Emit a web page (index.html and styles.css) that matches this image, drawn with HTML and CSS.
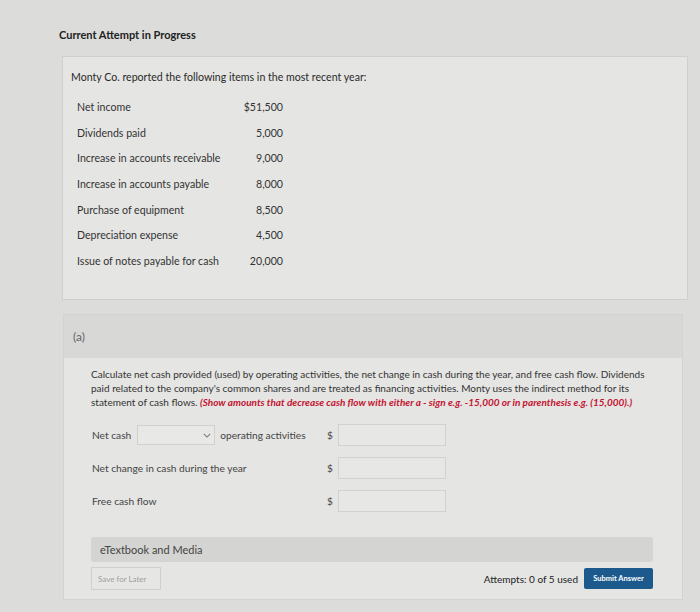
FILE: index.html
```html
<!DOCTYPE html>
<html lang="en">
<head>
<meta charset="utf-8">
<title>Current Attempt in Progress</title>
<link rel="stylesheet" href="styles.css">
</head>
<body>
<div class="page">
  <h1 class="attempt-title">Current Attempt in Progress</h1>

  <section class="problem-card">
    <p class="intro">Monty Co. reported the following items in the most recent year:</p>
    <div class="data-table">
      <div class="label">Net income</div><div class="value">$51,500</div>
      <div class="label">Dividends paid</div><div class="value">5,000</div>
      <div class="label">Increase in accounts receivable</div><div class="value">9,000</div>
      <div class="label">Increase in accounts payable</div><div class="value">8,000</div>
      <div class="label">Purchase of equipment</div><div class="value">8,500</div>
      <div class="label">Depreciation expense</div><div class="value">4,500</div>
      <div class="label">Issue of notes payable for cash</div><div class="value">20,000</div>
    </div>
  </section>

  <section class="question-card">
    <div class="part-band">(a)</div>
    <div class="question-body">
      <p class="question-text">Calculate net cash provided (used) by operating activities, the net change in cash during the year, and free cash flow. Dividends paid related to the company's common shares and are treated as financing activities. Monty uses the indirect method for its statement of cash flows. <span class="hint">(Show amounts that decrease cash flow with either a - sign e.g. -15,000 or in parenthesis e.g. (15,000).)</span></p>

      <div class="answer-grid">
        <div class="row-label">
          <span>Net cash</span>
          <span class="select"><svg class="chev" viewBox="0 0 10 6" width="8" height="5"><path d="M1 1 L5 5 L9 1" fill="none" stroke="#777" stroke-width="1.3"/></svg></span>
          <span>operating activities</span>
        </div>
        <div class="dollar">$</div>
        <div class="amount"></div>

        <div class="row-label">Net change in cash during the year</div>
        <div class="dollar">$</div>
        <div class="amount"></div>

        <div class="row-label">Free cash flow</div>
        <div class="dollar">$</div>
        <div class="amount"></div>
      </div>

      <div class="media-band">eTextbook and Media</div>

      <div class="footer-row">
        <button class="save-btn" type="button">Save for Later</button>
        <div class="submit-area">
          <span class="attempts">Attempts: 0 of 5 used</span>
          <button class="submit-btn" type="button">Submit Answer</button>
        </div>
      </div>
    </div>
  </section>
</div>
</body>
</html>
```

FILE: styles.css
```css
* { box-sizing: border-box; }

html, body {
  margin: 0;
  padding: 0;
  background: #dcdcda;
  font-family: Lato, "Open Sans", Arial, sans-serif;
  color: #2c2c2c;
}

.page {
  padding: 28px 12px 0 59px;
}

.attempt-title {
  margin: 0 0 15px 0;
  font-size: 11px;
  line-height: 13px;
  font-weight: 700;
  color: #222;
}

.problem-card {
  margin-left: 3px;
  width: 626px;
  height: 244px;
  border: 1px solid #cfcfcd;
  background: #e5e5e3;
  padding: 14px 8px 0 8px;
}

.intro {
  margin: 0;
  font-size: 10.6px;
  line-height: 13px;
  color: #2a2a2a;
}

.data-table {
  margin: 10px 0 0 6px;
  display: grid;
  grid-template-columns: 166px 40px;
  grid-auto-rows: 25.7px;
  font-size: 10.6px;
  color: #333;
  align-items: center;
}

.data-table .value {
  text-align: right;
  white-space: nowrap;
}

.question-card {
  margin: 14px 0 0 4px;
  width: 620px;
  background: #e5e5e3;
  border: 1px solid #d3d3d1;
  padding-bottom: 9px;
}

.part-band {
  height: 43px;
  background: #d8d8d6;
  padding-left: 9px;
  display: flex;
  align-items: center;
  font-size: 12px;
  color: #666;
}

.question-body {
  padding: 9px 27px 0 27px;
}

.question-text {
  margin: 0;
  width: 562px;
  font-size: 10px;
  line-height: 14px;
  color: #333;
}

.hint {
  display: inline-block;
  color: #c41230;
  font-weight: 700;
  font-style: italic;
  font-size: 10px;
  line-height: 14px;
  white-space: nowrap;
}

.answer-grid {
  margin-top: 15px;
  margin-left: 1px;
  display: grid;
  grid-template-columns: 235px 11px 108px;
  grid-auto-rows: 22px;
  row-gap: 11px;
  align-items: center;
  font-size: 10.2px;
  color: #444;
}

.row-label {
  display: flex;
  align-items: center;
  gap: 5px;
  white-space: nowrap;
}

.select {
  width: 78px;
  height: 20px;
  border: 1px solid #d0d0ce;
  background: #e8e8e6;
  display: flex;
  align-items: center;
  justify-content: flex-end;
  padding-right: 3px;
  margin-left: 1px;
}

.chev { display: block; }

.dollar {
  font-size: 10px;
  color: #444;
}

.amount {
  height: 22px;
  border: 1px solid #d2d2d0;
  background: #e7e7e5;
}

.media-band {
  margin-top: 25px;
  height: 25px;
  width: 562px;
  border-radius: 3px;
  background: #d4d4d2;
  display: flex;
  align-items: center;
  padding-left: 9px;
  font-size: 11px;
  color: #444;
}

.footer-row {
  margin-top: 5px;
  width: 562px;
  display: flex;
  justify-content: space-between;
  align-items: center;
}

.save-btn {
  width: 70px;
  height: 23px;
  border: 1px solid #d0d0ce;
  background: #e6e6e4;
  font-family: Lato, Arial, sans-serif;
  font-size: 8px;
  color: #a0a0a0;
  padding: 0;
  text-align: left;
  padding-left: 6px;
}

.submit-area {
  display: flex;
  align-items: center;
  gap: 6px;
}

.attempts {
  font-size: 10px;
  color: #222;
}

.submit-btn {
  width: 69px;
  height: 21px;
  border: none;
  border-radius: 2px;
  background: #1c5a8d;
  color: #fff;
  font-family: Lato, Arial, sans-serif;
  font-weight: 700;
  font-size: 7.5px;
  padding: 0;
}
```
